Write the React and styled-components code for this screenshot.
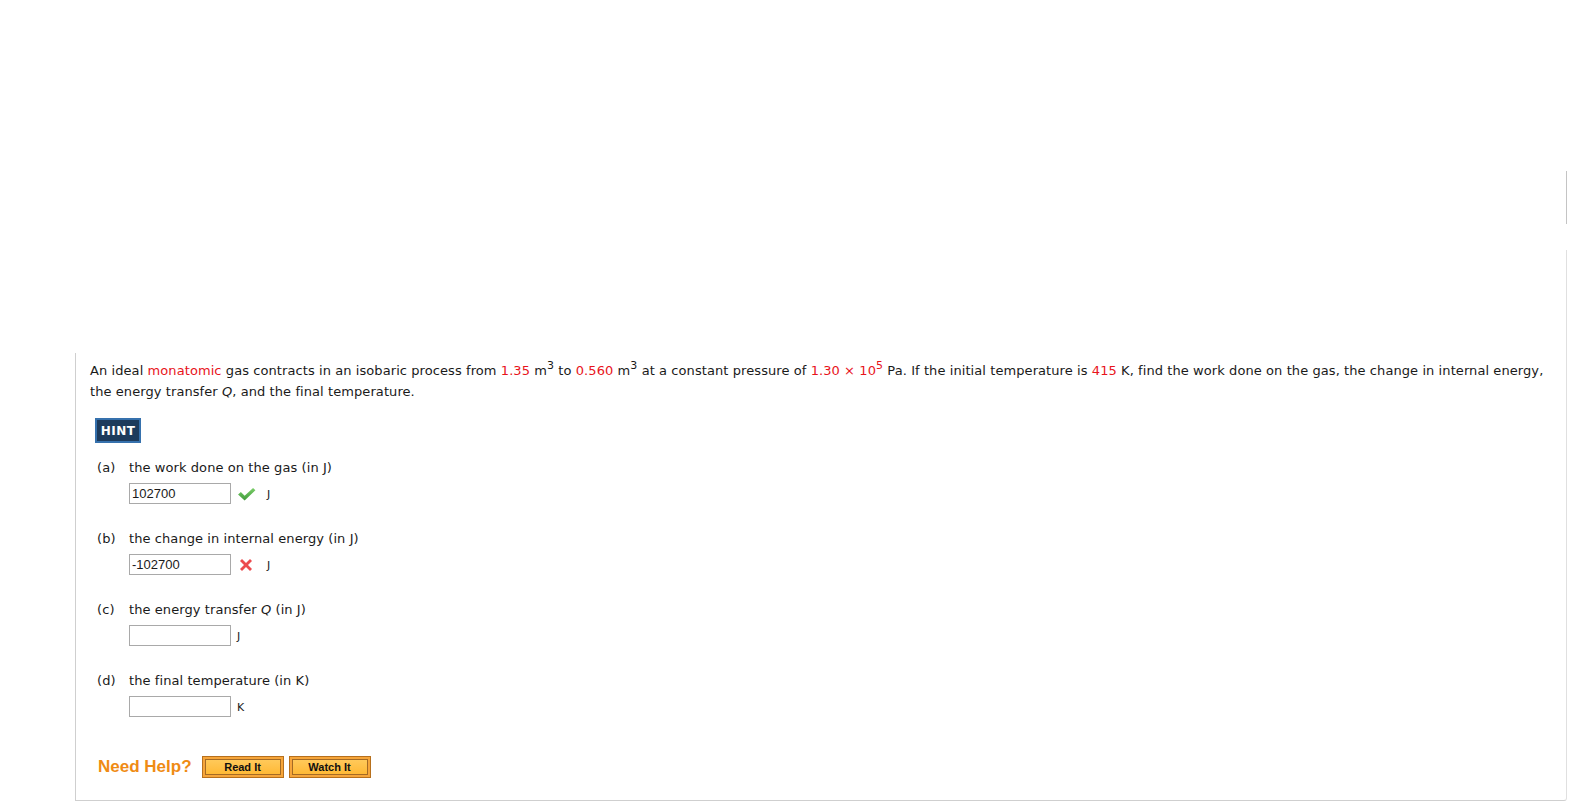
import React from "react";
import styled, { createGlobalStyle } from "styled-components";

const Global = createGlobalStyle`
  html, body { margin: 0; padding: 0; background: #fff; }
  body { font-family: "DejaVu Sans", Verdana, sans-serif; color: #1a1a1a; }
`;

const Page = styled.div`
  width: 1572px;
  height: 808px;
  overflow: hidden;
  padding-left: 75px;
  box-sizing: border-box;
`;

const PrevPanelEdge = styled.div`
  width: 1492px;
  box-sizing: border-box;
  margin-top: 171px;
  height: 53px;
  border-right: 1px solid #c4c4c4;
`;

const Panel = styled.div`
  width: 1492px;
  box-sizing: border-box;
  margin-top: 26px;
  height: 551px;
  padding-top: 103px;
  border-right: 1px solid #e0e0e0;
  border-bottom: 1px solid #cfcfcf;
  border-bottom-right-radius: 3px;
  display: flex;
  flex-direction: column;
`;

const Question = styled.div`
  flex: 1;
  border-left: 1px solid #cfcfcf;
  padding: 7px 20px 0 14px;
  display: flex;
  flex-direction: column;
  align-items: flex-start;
  letter-spacing: 0.08px;
`;

const Prompt = styled.p`
  margin: 0;
  font-size: 13px;
  line-height: 21px;
  color: #1a1a1a;
  sup {
    font-size: 11px;
    line-height: 0;
    vertical-align: 6px;
  }
`;

const Val = styled.span`
  color: #e8141b;
`;

const HintButton = styled.button`
  margin: 16px 0 0 5px;
  width: 46px;
  height: 25px;
  padding: 0;
  box-sizing: border-box;
  background: #1d3b5c;
  border: 2px solid #3671ad;
  color: #fff;
  font-family: "DejaVu Sans", Verdana, sans-serif;
  font-weight: bold;
  font-size: 12px;
  letter-spacing: 0.5px;
  cursor: pointer;
`;

const Parts = styled.div`
  margin-top: 17px;
  padding-left: 7px;
  display: flex;
  flex-direction: column;
`;

const Part = styled.div`
  display: grid;
  grid-template-columns: 32px auto;
  row-gap: 7px;
  margin-bottom: 27px;
`;

const Letter = styled.span`
  font-size: 13px;
  line-height: 16px;
`;

const Label = styled.span`
  font-size: 13px;
  line-height: 16px;
`;

const AnswerRow = styled.div`
  grid-column: 2;
  display: flex;
  align-items: center;
  height: 21px;
`;

const AnswerInput = styled.input`
  width: 102px;
  height: 21px;
  box-sizing: border-box;
  border: 1px solid #a9a9a9;
  padding: 0 0 0 2px;
  margin: 0;
  font-family: "Liberation Sans", Arial, sans-serif;
  font-size: 13px;
  letter-spacing: 0;
  color: #1a1a1a;
  background: #fff;
`;

const Mark = styled.span`
  display: inline-flex;
  align-items: center;
  justify-content: center;
  width: 20px;
  height: 18px;
  margin-left: 5px;
  margin-right: 11px;
`;

const Unit = styled.span`
  font-size: 11px;
  margin-left: ${(p) => (p.$afterMark ? "0" : "6px")};
  padding-top: 2px;
`;

const HelpRow = styled.div`
  display: flex;
  align-items: center;
  margin-top: 12px;
  padding-left: 8px;
  letter-spacing: 0;
`;

const HelpTitle = styled.span`
  font-family: "Liberation Sans", Arial, sans-serif;
  font-weight: bold;
  font-size: 17px;
  color: #ef8b14;
  margin-right: 10px;
`;

const HelpButton = styled.button`
  width: 82px;
  height: 22px;
  box-sizing: border-box;
  margin-right: 5px;
  padding: 2px;
  border: 1px solid #b7701d;
  background: #f6a53a;
  cursor: pointer;
  display: flex;
`;

const HelpInner = styled.span`
  flex: 1;
  display: flex;
  align-items: center;
  justify-content: center;
  border: 1px solid #a46a24;
  background: linear-gradient(#ffc95a, #ffb936);
  font-family: "Liberation Sans", Arial, sans-serif;
  font-weight: bold;
  font-size: 11px;
  color: #111;
`;

const Check = () => (
  <svg width="19" height="15" viewBox="0 0 20 16">
    <defs>
      <linearGradient id="ck" x1="0" y1="0" x2="0" y2="1">
        <stop offset="0" stopColor="#7ccf6a" />
        <stop offset="1" stopColor="#3f9a3a" />
      </linearGradient>
    </defs>
    <path d="M1 9 L4 6.5 L8 10.5 L17 2 L19.5 4.5 L8 15.5 Z" fill="url(#ck)" />
  </svg>
);

const Cross = () => (
  <svg width="16" height="16" viewBox="0 0 16 16">
    <path
      d="M2 4 L4 2 L8 6 L12 2 L14 4 L10 8 L14 12 L12 14 L8 10 L4 14 L2 12 L6 8 Z"
      fill="#ec4b4e"
    />
  </svg>
);

const parts = [
  { letter: "(a)", label: <>the work done on the gas (in J)</>, value: "102700", mark: "ok", unit: "J" },
  { letter: "(b)", label: <>the change in internal energy (in J)</>, value: "-102700", mark: "bad", unit: "J" },
  { letter: "(c)", label: <>the energy transfer <i>Q</i> (in J)</>, value: "", mark: null, unit: "J" },
  { letter: "(d)", label: <>the final temperature (in K)</>, value: "", mark: null, unit: "K" },
];

export default function App() {
  return (
    <>
      <Global />
      <Page>
        <PrevPanelEdge />
        <Panel>
          <Question>
            <Prompt>
              An ideal <Val>monatomic</Val> gas contracts in an isobaric process from <Val>1.35</Val> m<sup>3</sup> to{" "}
              <Val>0.560</Val> m<sup>3</sup> at a constant pressure of <Val>1.30 × 10<sup>5</sup></Val> Pa. If the initial
              temperature is <Val>415</Val> K, find the work done on the gas, the change in internal energy,
              <br />
              the energy transfer <i>Q</i>, and the final temperature.
            </Prompt>
            <HintButton>HINT</HintButton>
            <Parts>
              {parts.map((p) => (
                <Part key={p.letter}>
                  <Letter>{p.letter}</Letter>
                  <Label>{p.label}</Label>
                  <AnswerRow>
                    <AnswerInput defaultValue={p.value} readOnly />
                    {p.mark && <Mark>{p.mark === "ok" ? <Check /> : <Cross />}</Mark>}
                    <Unit $afterMark={!!p.mark}>{p.unit}</Unit>
                  </AnswerRow>
                </Part>
              ))}
            </Parts>
            <HelpRow>
              <HelpTitle>Need Help?</HelpTitle>
              <HelpButton>
                <HelpInner>Read It</HelpInner>
              </HelpButton>
              <HelpButton>
                <HelpInner>Watch It</HelpInner>
              </HelpButton>
            </HelpRow>
          </Question>
        </Panel>
      </Page>
    </>
  );
}
